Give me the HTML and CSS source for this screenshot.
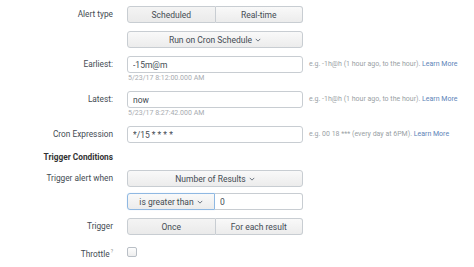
FILE: index.html
```html
<!DOCTYPE html>
<html>
<head>
  <meta charset="utf-8">
  <link rel="stylesheet" href="styles.css">
  <title>Alert Settings</title>
</head>
<body>
  <div class="alertForm">
    <div class="row">
      <div class="label">Alert type</div>
      <div class="control group">
        <a class="btn active">Scheduled</a>
        <a class="btn">Real-time</a>
      </div>
    </div>
    <div class="row">
      <div class="label"></div>
      <div class="control">
        <a class="btn full">Run on Cron Schedule <svg class="caret" viewBox="0 0 8 5"><polyline points="1,1 4,4 7,1"/></svg></a>
      </div>
    </div>
    <div class="row withHint">
      <div class="label">Earliest:</div>
      <div class="control">
        <input class="text" type="text" value="-15m@m">
        <div class="date">5/23/17 8:12:00.000 AM</div>
      </div>
      <div class="help">e.g. -1h@h (1 hour ago, to the hour). <a class="learn">Learn More</a></div>
    </div>
    <div class="row withHint">
      <div class="label">Latest:</div>
      <div class="control">
        <input class="text" type="text" value="now">
        <div class="date">5/23/17 8:27:42.000 AM</div>
      </div>
      <div class="help">e.g. -1h@h (1 hour ago, to the hour). <a class="learn">Learn More</a></div>
    </div>
    <div class="row">
      <div class="label">Cron Expression</div>
      <div class="control">
        <input class="text" type="text" value="*/15 * * * *">
      </div>
      <div class="help">e.g. 00 18 *** (every day at 6PM). <a class="learn">Learn More</a></div>
    </div>
    <div class="row heading">
      <div class="label">Trigger Conditions</div>
    </div>
    <div class="row tight">
      <div class="label">Trigger alert when</div>
      <div class="control">
        <a class="btn full">Number of Results <svg class="caret" viewBox="0 0 8 5"><polyline points="1,1 4,4 7,1"/></svg></a>
      </div>
    </div>
    <div class="row">
      <div class="label"></div>
      <div class="control group">
        <a class="btn focus">is greater than <svg class="caret" viewBox="0 0 8 5"><polyline points="1,1 4,4 7,1"/></svg></a>
        <input class="text half" type="text" value="0">
      </div>
    </div>
    <div class="row">
      <div class="label">Trigger</div>
      <div class="control group">
        <a class="btn active">Once</a>
        <a class="btn">For each result</a>
      </div>
    </div>
    <div class="row">
      <div class="label">Throttle<sup>?</sup></div>
      <div class="control">
        <span class="check"></span>
      </div>
    </div>
  </div>
</body>
</html>
```

FILE: styles.css
```css
body {
  margin: 0;
  background-color: #fff;
  font-family: Roboto, "Liberation Sans", sans-serif;
  font-size: 8.3px;
  color: #444b53;
}
.alertForm {
  padding-top: 6px;
}
.row {
  display: flex;
  align-items: flex-start;
  margin-bottom: 8px;
}
.row.tight {
  margin-bottom: 6px;
}
.label {
  width: 113px;
  flex: none;
  text-align: right;
  line-height: 17px;
  height: 17px;
  margin-right: 14px;
  white-space: nowrap;
}
.label sup {
  font-size: 5px;
  color: #888;
  vertical-align: 4px;
  margin-left: 1px;
}
.heading {
  margin-bottom: 7px;
}
.heading .label {
  font-weight: bold;
  color: #333;
  height: 12px;
  line-height: 12px;
}
.control {
  width: 176px;
  flex: none;
}
.group {
  display: flex;
}
.btn {
  display: flex;
  align-items: center;
  justify-content: center;
  box-sizing: border-box;
  height: 17px;
  flex: 1;
  border: 1px solid #c8cdd2;
  background: linear-gradient(#f9f9f9, #ececec);
  color: #444b53;
  font-size: 8.5px;
  cursor: pointer;
}
.group .btn:first-child {
  border-radius: 3px 0 0 3px;
}
.group .btn:last-child {
  border-radius: 0 3px 3px 0;
  border-left: none;
}
.btn.active {
  background: linear-gradient(#f4f4f4, #eaeaea);
}
.btn.full {
  border-radius: 3px;
}
.btn.focus {
  border-color: #8fb8e2;
  box-shadow: 0 0 1px #bcd6f0;
  flex: none;
  width: 88px;
  border-radius: 3px 0 0 3px;
}
.caret {
  width: 6px;
  height: 4px;
  margin-left: 3px;
  fill: none;
  stroke: #5c6773;
  stroke-width: 1.2;
}
.text {
  display: block;
  box-sizing: border-box;
  width: 176px;
  height: 17px;
  margin: 0;
  padding: 0 5px;
  border: 1px solid #c8cdd2;
  border-radius: 3px;
  background-color: #fff;
  font-family: Roboto, "Liberation Sans", sans-serif;
  font-size: 8.5px;
  color: #444b53;
  outline: none;
}
.text.half {
  width: 88px;
  border-left: none;
  border-radius: 0 3px 3px 0;
}
.date {
  height: 10px;
  line-height: 10px;
  font-size: 7px;
  color: #a7abb0;
  padding-left: 1px;
}
.help {
  margin-left: 6px;
  line-height: 17px;
  font-size: 7px;
  color: #9a9fa5;
  white-space: nowrap;
}
.learn {
  color: #5d84b8;
}
.check {
  display: block;
  box-sizing: border-box;
  width: 10px;
  height: 10px;
  margin-top: 4px;
  border: 1px solid #b9bfc6;
  border-radius: 2px;
  background: linear-gradient(#fdfdfd, #eeeeee);
}
```
